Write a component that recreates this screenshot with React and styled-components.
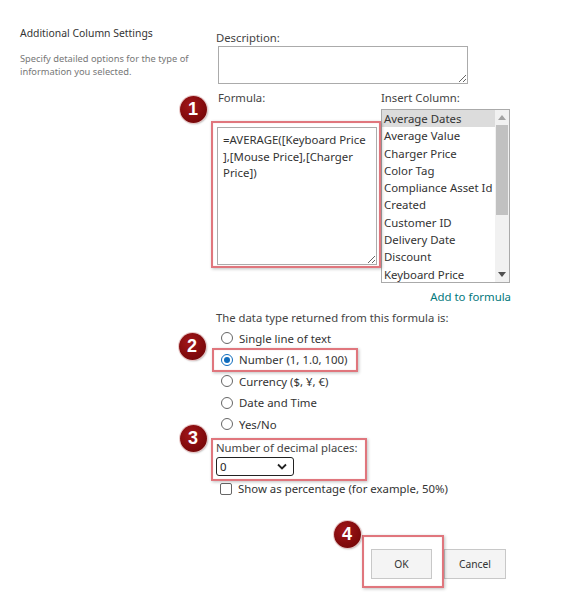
import React from "react";
import styled, { createGlobalStyle } from "styled-components";

const Global = createGlobalStyle`
  html, body { margin: 0; padding: 0; background: #fff; }
  body { font-family: "Segoe UI", "Noto Sans", "Open Sans", sans-serif; color: #333; }
  * { box-sizing: border-box; }
`;

const Page = styled.div`
  display: flex;
  padding: 25px 0 0 20px;
  width: 572px;
  height: 610px;
  overflow: hidden;
`;

const Side = styled.div`
  width: 196px;
  flex: none;
`;

const SideTitle = styled.div`
  font-size: 10.4px;
  line-height: 16px;
  color: #333;
`;

const SideDesc = styled.div`
  margin-top: 10.5px;
  font-size: 9.3px;
  line-height: 13px;
  color: #777;
`;

const Main = styled.div`
  width: 300px;
  flex: none;
`;

const Label = styled.div`
  font-size: 11.3px;
  line-height: 16px;
  color: #444;
  margin-top: ${(p) => p.$mt || 0}px;
  margin-left: ${(p) => p.$ml || 0}px;
  white-space: nowrap;
`;

const DescBox = styled.textarea`
  display: block;
  margin-left: 2px;
  width: 250px;
  height: 38px;
  border: 1px solid #ababab;
  border-radius: 0;
  padding: 3px 5px;
  font: inherit;
  resize: both;
  outline: none;
`;

const FormulaRow = styled.div`
  display: flex;
  margin-top: 6px;
`;

const FormulaCol = styled.div`
  width: 165px;
  flex: none;
`;

const Highlight = styled.div`
  position: relative;
  border: 2px solid #e0767d;
  box-shadow: 1px 1px 3px rgba(0, 0, 0, 0.25), inset 0 0 1px rgba(224, 118, 125, 0.6);
`;

const FormulaHighlight = styled(Highlight)`
  margin: 15px 0 0 -5px;
  width: 170px;
  height: 147px;
  padding: 4px 2px 1px 4px;
`;

const FormulaBox = styled.textarea`
  display: block;
  width: 160px;
  height: 138px;
  border: 1px solid #ababab;
  border-radius: 0;
  padding: 4px 5px;
  font: inherit;
  font-size: 11.4px;
  line-height: 16.5px;
  color: #333;
  resize: both;
  outline: none;
  overflow: hidden;
  white-space: pre;
`;

const Badge = styled.div`
  position: absolute;
  left: ${(p) => p.$x}px;
  top: ${(p) => p.$y}px;
  width: 27px;
  height: 27px;
  border-radius: 50%;
  background: radial-gradient(circle at 40% 35%, #a3161a 0%, #830b0d 55%, #6a0506 100%);
  box-shadow: 0 0 0 1px #e9c8c8, 1px 1px 2px rgba(0, 0, 0, 0.35);
  color: #fff;
  font-family: "Liberation Sans", Arial, sans-serif;
  font-weight: 700;
  font-size: 18px;
  line-height: 27px;
  text-align: center;
  z-index: 2;
`;

const InsertCol = styled.div`
  width: 130px;
  flex: none;
  display: flex;
  flex-direction: column;
`;

const ListBox = styled.div`
  margin-top: 3px;
  width: 129px;
  height: 174px;
  border: 1px solid #aaa;
  display: flex;
  overflow: hidden;
`;

const Items = styled.div`
  flex: 1;
  min-width: 0;
`;

const Item = styled.div`
  height: 17.3px;
  line-height: 17.3px;
  font-size: 11.4px;
  padding-left: 2px;
  white-space: nowrap;
  overflow: hidden;
  color: #333;
  background: ${(p) => (p.$selected ? "#dcdcdc" : "transparent")};
`;

const ScrollBar = styled.div`
  width: 14px;
  flex: none;
  background: #f1f1f1;
  display: flex;
  flex-direction: column;
  align-items: center;
`;

const Arrow = styled.div`
  height: 15px;
  width: 14px;
  display: flex;
  align-items: center;
  justify-content: center;
`;

const Thumb = styled.div`
  width: 12px;
  height: 90px;
  background: #c1c1c1;
`;

const Track = styled.div`
  flex: 1;
`;

const AddLink = styled.div`
  margin-top: 6px;
  font-size: 11.4px;
  line-height: 16px;
  color: #03787c;
  text-align: right;
`;

const RadioList = styled.div`
  margin-top: 1.25px;
`;

const RadioRow = styled.label`
  display: flex;
  align-items: center;
  height: 21.5px;
  padding-left: 5px;
  font-size: 11.4px;
  color: #333;
  gap: 6px;
`;

const RadioHighlight = styled(Highlight)`
  display: flex;
  align-items: center;
  width: 146px;
  height: 24px;
  margin: -1.25px 0 -1.25px -4px;
  padding-left: 7px;
  gap: 6px;
  font-size: 11.4px;
`;

const Radio = styled.span`
  width: 12px;
  height: 12px;
  border-radius: 50%;
  flex: none;
  border: 1px solid ${(p) => (p.$on ? "#0f6cbd" : "#666")};
  background: #fff;
  display: flex;
  align-items: center;
  justify-content: center;
  &::after {
    content: "";
    display: ${(p) => (p.$on ? "block" : "none")};
    width: 6px;
    height: 6px;
    border-radius: 50%;
    background: #0f6cbd;
  }
`;

const DecimalHighlight = styled(Highlight)`
  margin: 3px 0 0 -5px;
  width: 156px;
  height: 43px;
  padding: 0 0 0 3px;
`;

const Select = styled.div`
  margin-top: 1px;
  width: 78px;
  height: 19px;
  border: 1.5px solid #222;
  border-radius: 3px;
  display: flex;
  align-items: center;
  justify-content: space-between;
  padding: 0 6px 0 3px;
  font-size: 11.4px;
  color: #222;
`;

const CheckRow = styled.label`
  display: flex;
  align-items: center;
  height: 16px;
  padding-left: 4px;
  gap: 6px;
  font-size: 11.4px;
  color: #333;
`;

const Check = styled.span`
  width: 12px;
  height: 12px;
  border: 1px solid #666;
  border-radius: 2px;
  flex: none;
`;

const ButtonRow = styled.div`
  display: flex;
  align-items: flex-start;
  margin: 38px 0 0 146px;
`;

const ButtonHighlight = styled(Highlight)`
  width: 82px;
  height: 53px;
  padding: 12px 0 0 7px;
`;

const Button = styled.div`
  width: ${(p) => p.$w || 62}px;
  height: 30px;
  margin-top: ${(p) => p.$mt || 0}px;
  border: 1px solid #c8c8c8;
  background: #f4f4f4;
  display: flex;
  align-items: center;
  justify-content: center;
  font-size: 10.3px;
  color: #333;
`;

const columns = [
  "Average Dates",
  "Average Value",
  "Charger Price",
  "Color Tag",
  "Compliance Asset Id",
  "Created",
  "Customer ID",
  "Delivery Date",
  "Discount",
  "Keyboard Price",
];

const types = [
  "Single line of text",
  "Number (1, 1.0, 100)",
  "Currency ($, ¥, €)",
  "Date and Time",
  "Yes/No",
];

export default function App() {
  return (
    <>
      <Global />
      <Page>
        <Side>
          <SideTitle>Additional Column Settings</SideTitle>
          <SideDesc>
            Specify detailed options for the type of
            <br />
            information you selected.
          </SideDesc>
        </Side>
        <Main>
          <Label $mt={5}>Description:</Label>
          <DescBox readOnly defaultValue="" />
          <FormulaRow>
            <FormulaCol>
              <Label $ml={2}>Formula:</Label>
              <FormulaHighlight>
                <Badge $x={-33.5} $y={-27.5}>1</Badge>
                <FormulaBox
                  readOnly
                  wrap="off"
                  defaultValue={"=AVERAGE([Keyboard Price\n],[Mouse Price],[Charger\nPrice])"}
                />
              </FormulaHighlight>
            </FormulaCol>
            <InsertCol>
              <Label>Insert Column:</Label>
              <ListBox>
                <Items>
                  {columns.map((c, i) => (
                    <Item key={c} $selected={i === 0}>
                      {c}
                    </Item>
                  ))}
                </Items>
                <ScrollBar>
                  <Arrow>
                    <svg width="8" height="5" viewBox="0 0 8 5">
                      <path d="M0 5 L4 0 L8 5 Z" fill="#a3a3a3" />
                    </svg>
                  </Arrow>
                  <Thumb />
                  <Track />
                  <Arrow>
                    <svg width="8" height="5" viewBox="0 0 8 5">
                      <path d="M0 0 L4 5 L8 0 Z" fill="#505050" />
                    </svg>
                  </Arrow>
                </ScrollBar>
              </ListBox>
              <AddLink>Add to formula</AddLink>
            </InsertCol>
          </FormulaRow>
          <Label $mt={5}>The data type returned from this formula is:</Label>
          <RadioList>
            {types.map((t, i) =>
              i === 1 ? (
                <RadioHighlight key={t}>
                  <Badge $x={-35.5} $y={-16.5}>2</Badge>
                  <Radio $on />
                  <span>{t}</span>
                </RadioHighlight>
              ) : (
                <RadioRow key={t}>
                  <Radio />
                  <span>{t}</span>
                </RadioRow>
              )
            )}
          </RadioList>
          <DecimalHighlight>
            <Badge $x={-33.5} $y={-14.5}>3</Badge>
            <Label>Number of decimal places:</Label>
            <Select>
              <span>0</span>
              <svg width="10" height="7" viewBox="0 0 10 7">
                <path d="M1 1.5 L5 5.5 L9 1.5" fill="none" stroke="#222" strokeWidth="1.8" />
              </svg>
            </Select>
          </DecimalHighlight>
          <CheckRow>
            <Check />
            <span>Show as percentage (for example, 50%)</span>
          </CheckRow>
          <ButtonRow>
            <ButtonHighlight>
              <Badge $x={-30.5} $y={-15.5}>4</Badge>
              <Button $w={61}>OK</Button>
            </ButtonHighlight>
            <Button $w={62} $mt={14}>Cancel</Button>
          </ButtonRow>
        </Main>
      </Page>
    </>
  );
}
